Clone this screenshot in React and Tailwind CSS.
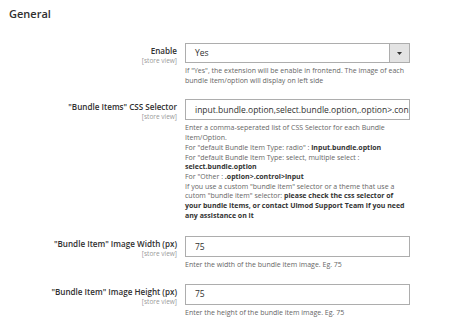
import React from "react";

const Label = ({ children }) => (
  <div className="w-[177px] shrink-0 text-right pt-[2px]">
    <div className="text-[8.1px] leading-[12px] font-semibold text-[#303030]">{children}</div>
    <div className="text-[6.5px] leading-[8px] text-[#999]">[store view]</div>
  </div>
);

const TextInput = ({ value }) => (
  <div className="h-[21px] w-[225px] border border-[#adadad] bg-white px-[9px] flex items-center overflow-hidden whitespace-nowrap text-[8.5px] text-[#303030]">
    {value}
  </div>
);

const Help = ({ children }) => (
  <div className="mt-[3px] w-[225px] text-[7px] leading-[9.7px] text-[#666]">{children}</div>
);

export default function App() {
  return (
    <div className="w-[474px] h-[325px] bg-white overflow-hidden" style={{ fontFamily: '"Open Sans", sans-serif' }}>
      <div className="pl-[9px] pt-[5px] text-[11px] leading-[17px] font-semibold text-[#303030]">General</div>

      <div className="flex gap-[8px] mt-[21px]">
        <Label>Enable</Label>
        <div>
          <div className="h-[20px] w-[225px] border border-[#adadad] bg-white flex items-stretch">
            <div className="flex-1 px-[9px] flex items-center text-[8.5px] text-[#303030]">Yes</div>
            <div className="w-[20px] border-l border-[#adadad] bg-[#e3e3e3] flex items-center justify-center">
              <svg width="5" height="3" viewBox="0 0 5 3"><path d="M0 0h5L2.5 3z" fill="#333" /></svg>
            </div>
          </div>
          <Help>
            If "Yes", the extension will be enable in frontend. The image of each bundle item/option will display on left side
          </Help>
        </div>
      </div>

      <div className="flex gap-[8px] mt-[14px]">
        <Label>"Bundle Items" CSS Selector</Label>
        <div>
          <TextInput value="input.bundle.option,select.bundle.option,.option>.control>input" />
          <Help>
            Enter a comma-seperated list of CSS Selector for each Bundle Item/Option.
            <br />
            For "default Bundle Item Type: radio" : <b className="font-bold text-[#333]">input.bundle.option</b>
            <br />
            For "default Bundle Item Type: select, multiple select : <b className="font-bold text-[#333]">select.bundle.option</b>
            <br />
            For "Other : <b className="font-bold text-[#333]">.option&gt;.control&gt;input</b>
            <br />
            If you use a custom "bundle item" selector or a theme that use a cutom "bundle item" selector:{" "}
            <b className="font-bold text-[#333]">
              please check the css selector of your bundle items, or contact Ulmod Support Team if you need any assistance on it
            </b>
          </Help>
        </div>
      </div>

      <div className="flex gap-[8px] mt-[16px]">
        <Label>"Bundle Item" Image Width (px)</Label>
        <div>
          <TextInput value="75" />
          <Help>Enter the width of the bundle item image. Eg. 75</Help>
        </div>
      </div>

      <div className="flex gap-[8px] mt-[14px]">
        <Label>"Bundle Item" Image Height (px)</Label>
        <div>
          <TextInput value="75" />
          <Help>Enter the height of the bundle item image. Eg. 75</Help>
        </div>
      </div>
    </div>
  );
}
